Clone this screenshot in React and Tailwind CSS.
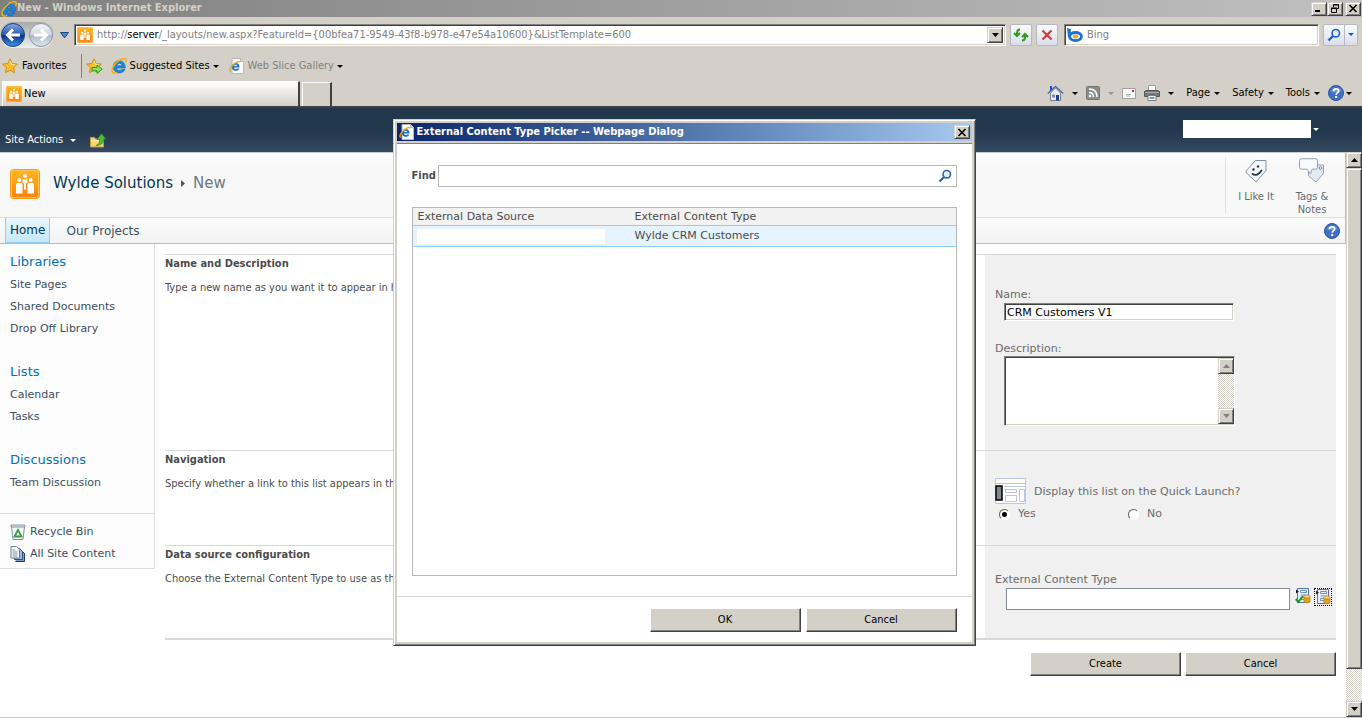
import React, { useState } from 'react';

const quickLaunch = [
  { title: 'Libraries', items: ['Site Pages', 'Shared Documents', 'Drop Off Library'] },
  { title: 'Lists', items: ['Calendar', 'Tasks'] },
  { title: 'Discussions', items: ['Team Discussion'] },
];

// Classic Windows bevels
const sunken =
  'bg-white border border-t-[#808080] border-l-[#808080] border-r-white border-b-white shadow-[inset_1px_1px_0_#404040,inset_-1px_-1px_0_#d4d0c8]';
const raised =
  'bg-[#d4d0c8] border border-t-[#d4d0c8] border-l-[#d4d0c8] border-r-[#404040] border-b-[#404040] shadow-[inset_1px_1px_0_#fff,inset_-1px_-1px_0_#808080]';
const checker =
  'bg-[conic-gradient(#fff_25%,#d4d0c8_0_50%,#fff_0_75%,#d4d0c8_0)] bg-[length:2px_2px]';
const tahoma = "font-['DejaVu_Sans_Condensed',Tahoma,sans-serif]";

function Caret({ className = 'text-black' }) {
  return (
    <svg width="6" height="3" viewBox="0 0 6 3" className={`shrink-0 ${className}`}>
      <path d="M0 0h6L3 3z" fill="currentColor" />
    </svg>
  );
}

function PeopleIcon({ size }) {
  return (
    <svg width={size} height={size} viewBox="0 0 30 30" className="shrink-0">
      <defs>
        <linearGradient id="orange" x1="0" y1="0" x2="0" y2="1">
          <stop offset="0" stopColor="#ffb81c" />
          <stop offset="1" stopColor="#ff7f0e" />
        </linearGradient>
      </defs>
      <rect x="0.5" y="0.5" width="29" height="29" rx="3" fill="url(#orange)" stroke="#f6a01a" />
      <rect x="1.5" y="1.5" width="27" height="27" rx="2" fill="none" stroke="#ffc64d" />
      <g fill="#fff">
        <circle cx="9.3" cy="11" r="2" />
        <circle cx="20.7" cy="11" r="2" />
        <circle cx="15" cy="7" r="2" />
        <path d="M6 15.500q0-1.500 1.500-1.500h3.500q1.500 0 1.500 1.500V24.500H6zM17.500 15.500q0-1.500 1.500-1.500h3.500q1.500 0 1.500 1.500v9h-6.500z" />
        <path d="M12.500 10.500h5v3l-1.500 1v6h-2v-6l-1.500-1z" />
      </g>
    </svg>
  );
}

function IeIcon() {
  return (
    <svg width="16" height="16" viewBox="0.5 0 16 16" className="shrink-0">
      <path d="M14.800 10H6.200c.2 1.500 1.300 2.300 2.700 2.300 1.100 0 1.900-.4 2.300-1.100h3.200c-.9 2.500-2.900 3.700-5.600 3.700C5.200 14.900 2.700 12.500 2.700 8.900 2.700 5.300 5.200 2.800 8.700 2.800c3.800 0 6.200 2.600 6.100 7.200zM6.300 7.700h5.200c-.1-1.400-1.200-2.300-2.600-2.300S6.500 6.300 6.300 7.700z" fill="#1d86dd" stroke="#0b55a8" strokeWidth=".5" />
      <path d="M3 15C-.4 13.500 2.500 6.500 8 2.800c3.300-2.200 6.900-2.800 7.600-1.300.4.800.1 2-.6 3.200" fill="none" stroke="#efb012" strokeWidth="1.500" />
      <path d="M3 15c1 .5 2.400.1 3.800-.7" fill="none" stroke="#efb012" strokeWidth="1.300" />
    </svg>
  );
}

function IePageIcon() {
  return (
    <svg width="16" height="16" viewBox="0 0 16 16" className="shrink-0">
      <path d="M3 .5h8.500l3 3v12H3z" fill="#fbfbfb" stroke="#b9b9b9" />
      <path d="M11.500.5v3h3" fill="#ddd" stroke="#b9b9b9" />
      <path d="M10.500 9.500H5c.2 1.200.9 1.600 1.800 1.600.7 0 1.100-.2 1.500-.7h2c-.6 1.600-1.900 2.400-3.600 2.400-2.300 0-3.900-1.400-3.900-3.700S4.500 5 6.800 5s3.800 1.700 3.700 4.500zM5 8h3.200C8 7.100 7.500 6.700 6.700 6.700S5.200 7.100 5 8z" fill="#1a74cf" />
      <path d="M1.500 13.800C-.3 12 2.500 7.500 6 5.200c2.500-1.600 4.800-2 5.300-1" fill="none" stroke="#e9a90c" strokeWidth="1.300" />
    </svg>
  );
}

function StarIcon({ arrow }) {
  return (
    <svg width="17" height="16" viewBox="0 0 17 16" className="shrink-0">
      <path d="M8 .8l2.200 4.800 5.200.5-3.900 3.500 1.100 5.200L8 12.200l-4.600 2.600 1.100-5.200L.6 6.100l5.200-.5z" fill="#fbbf2c" stroke="#d68c10" />
      <path d="M8 2.800l1.300 3.500 3.500.4" fill="none" stroke="#ffe594" />
      {arrow && <path d="M6 9.500h5v-2.500l5.200 4.200-5.200 4.200v-2.600H6z" fill="#8fe35c" stroke="#2c9a1c" />}
    </svg>
  );
}

function HelpIcon() {
  return (
    <svg width="16" height="16" viewBox="0 0 16 16" className="shrink-0">
      <circle cx="8" cy="8" r="7.500" fill="#3f6fc6" stroke="#2a55a8" />
      <path d="M2.500 6a6 5 0 0 1 11 0q-5.500 2.500-11 0z" fill="#6d98dd" />
      <path d="M5.600 6.200c0-3.200 5-3.100 5-.3 0 1.700-2.400 1.900-2.400 3.900" fill="none" stroke="#fff" strokeWidth="1.800" />
      <rect x="7.200" y="11" width="2" height="2" fill="#fff" />
    </svg>
  );
}

function RoundArrow({ forward }) {
  return (
    <svg width="26" height="26" viewBox="0 0 26 26">
      <defs>
        <linearGradient id={forward ? 'fwd' : 'back'} x1="0" y1="0" x2="0" y2="1">
          <stop offset="0" stopColor={forward ? '#f4f5f7' : '#86a9de'} />
          <stop offset=".48" stopColor={forward ? '#d3d8e0' : '#2a5cb4'} />
          <stop offset=".52" stopColor={forward ? '#b3bccb' : '#0a2f86'} />
          <stop offset="1" stopColor={forward ? '#dce4f0' : '#3f9bee'} />
        </linearGradient>
      </defs>
      <circle cx="13" cy="13" r="11.500" fill={forward ? 'url(#fwd)' : 'url(#back)'} stroke={forward ? '#8e98a8' : '#1c3f80'} />
      <path
        d={forward ? 'M6 13h12M13 7.500l5.500 5.500-5.500 5.500' : 'M20 13H8M13 7.500L7.500 13l5.500 5.500'}
        fill="none"
        stroke="#fff"
        strokeWidth="3"
      />
    </svg>
  );
}

function Magnifier({ size = 14, color = '#1f5fe0' }) {
  return (
    <svg width={size} height={size} viewBox="0 0 14 14" className="shrink-0">
      <path d="M1.500 12.500l4.500-4.500" stroke={color} strokeWidth="2.400" />
      <circle cx="8.800" cy="5.200" r="3.700" fill="#e8f4fd" stroke={color} strokeWidth="1.700" />
    </svg>
  );
}

function WindowButton({ label, children }) {
  return (
    <button type="button" aria-label={label} className={`w-4 h-3.5 flex items-center justify-center ${raised}`}>
      <svg width="10" height="9" viewBox="0 0 10 9" fill="none" stroke="#000">{children}</svg>
    </button>
  );
}

function CloseGlyph() {
  return <path d="M1.500 1l7 7M8.500 1l-7 7" strokeWidth="1.600" />;
}

function ScrollButton({ down, muted, label }) {
  return (
    <button type="button" aria-label={label} className={`w-4 h-4 shrink-0 flex items-center justify-center ${raised}`}>
      <svg width="7" height="4" viewBox="0 0 7 4">
        <path d={down ? 'M0 0h7L3.500 4z' : 'M0 4h7L3.500 0z'} fill={muted ? '#808080' : '#000'} />
      </svg>
    </button>
  );
}

function FormButton({ children, onClick }) {
  return (
    <button
      type="button"
      onClick={onClick}
      className={`w-[151px] h-6 text-[11px] text-black bg-[#d4d0c8] border border-t-white border-l-white border-r-[#404040] border-b-[#404040] shadow-[inset_-1px_-1px_0_#808080] ${tahoma}`}
    >
      {children}
    </button>
  );
}

function TitleBar() {
  return (
    <div className="h-[17px] flex items-center pl-px pr-px bg-linear-to-r from-[#808080] to-[#c0c0c0]">
      <IeIcon />
      <h1 className={`flex-1 text-[11px] font-bold text-[#d4d0c8] ${tahoma}`}>New - Windows Internet Explorer</h1>
      <WindowButton label="Minimize"><path d="M1 7h5" strokeWidth="2" /></WindowButton>
      <WindowButton label="Restore">
        <path d="M3.500 3V.5h5v4H7M3 1h6M1.500 4.500h5v4h-5zM1 4h6" />
      </WindowButton>
      <div className="w-0.5" />
      <WindowButton label="Close"><CloseGlyph /></WindowButton>
    </div>
  );
}

function AddressRow() {
  const small = 'h-[22px] flex items-center justify-center border border-[#b4b9c4] bg-linear-to-b from-[#fafbfd] to-[#d9deea]';
  return (
    <div className="h-[35px] flex items-center pr-1">
      <div className="flex gap-0.5 items-center rounded-full bg-linear-to-b from-[#aaaaaa] to-[#eeeeee]">
        <button type="button" aria-label="Back"><RoundArrow /></button>
        <button type="button" aria-label="Forward"><RoundArrow forward /></button>
      </div>
      <button type="button" aria-label="Recent pages" className="w-5 flex justify-center">
        <svg width="9" height="6" viewBox="0 0 9 6"><path d="M.5.5h8L5 5.500H4z" fill="#4d83c4" stroke="#174a86" /></svg>
      </button>
      <div className={`flex-1 h-[22px] flex items-center px-0.5 gap-1 ${sunken}`}>
        <PeopleIcon size={16} />
        <div className={`flex-1 pt-px text-[11px] text-[#808080] whitespace-nowrap ${tahoma}`}>
          http://<span className="text-black">server</span>/_layouts/new.aspx?FeatureId={'{00bfea71-9549-43f8-b978-e47e54a10600}'}&amp;ListTemplate=600
        </div>
        <ScrollButton down label="Show addresses" />
      </div>
      <button type="button" aria-label="Refresh" className={`ml-1 w-[22px] rounded-xs ${small}`}>
        <svg width="16" height="14" viewBox="0 0 16 14" fill="none" stroke="#2f9a1c" strokeWidth="2">
          <path d="M7 1.500Q4 1.500 4 5v2M1 5l3 3 3-3M9 12.500q3 0 3-3.500V7M9 9l3-3 3 3" />
        </svg>
      </button>
      <button type="button" aria-label="Stop" className={`ml-1 w-[22px] rounded-xs ${small}`}>
        <svg width="12" height="12" viewBox="0 0 12 12" stroke="#cf3a3a" strokeWidth="2.200"><path d="M1.500 1.500l9 9M10.500 1.500l-9 9" /></svg>
      </button>
      <div className={`ml-1.5 w-[255px] h-[22px] flex items-center gap-1 pl-0.5 ${sunken}`}>
        <svg width="16" height="16" viewBox="0 0 16 16" className="shrink-0">
          <ellipse cx="8.500" cy="9.500" rx="6" ry="4" fill="#fff" stroke="#1573d6" strokeWidth="2.800" />
          <path d="M0 1l3.800 1v8H1Z" fill="#1573d6" />
          <ellipse cx="8.500" cy="9.500" rx="2.700" ry="2" fill="#f7a51c" />
        </svg>
        <input aria-label="Search" placeholder="Bing" className={`flex-1 min-w-0 pt-px text-[11px] placeholder:text-[#808080] outline-none ${tahoma}`} />
      </div>
      <button type="button" aria-label="Go" className={`ml-1 w-[22px] rounded-l-xs ${small}`}><Magnifier /></button>
      <button type="button" aria-label="Search options" className={`w-[13px] rounded-r-xs border-l-0 ${small}`}>
        <Caret className="text-[#1453d8]" />
      </button>
    </div>
  );
}

function FavoritesRow() {
  return (
    <div className={`h-[28px] flex items-center pl-0.5 text-[11px] ${tahoma}`}>
      <button type="button" className="flex items-center gap-[3px]"><StarIcon />Favorites</button>
      <div className="ml-3.5 h-6 border-l border-[#808080]" />
      <button type="button" aria-label="Add to Favorites Bar" className="ml-1"><StarIcon arrow /></button>
      <button type="button" className="ml-2 flex items-center gap-[3px]"><IeIcon />Suggested Sites<Caret /></button>
      <button type="button" className="ml-2.5 flex items-center gap-[3px] text-[#808080]"><IePageIcon />Web Slice Gallery<Caret /></button>
    </div>
  );
}

function CommandBar() {
  return (
    <div className={`ml-auto flex items-center self-start h-[26px] pr-2.5 text-[11px] ${tahoma}`}>
      <button type="button" aria-label="Home" className="flex items-center gap-2">
        <svg width="17" height="17" viewBox="0 0 17 17">
          <path d="M3.500 8v7.500h10V8L8.500 3z" fill="#e9e9ee" stroke="#77809a" />
          <path d="M.8 8.500L8.500 1.500l7.700 7" fill="none" stroke="#4b6faf" strokeWidth="1.500" />
          <path d="M3 1h2v4l-2 1z" fill="#2648c8" />
          <path d="M9 10h3v5.500H9z" fill="#1f3f87" /><path d="M5 9.500h3v3H5z" fill="#7b8bb0" />
        </svg>
        <Caret />
      </button>
      <button type="button" aria-label="Feeds" className="ml-2 flex items-center gap-2">
        <svg width="14" height="14" viewBox="0 0 14 14">
          <rect x=".5" y=".5" width="13" height="13" rx="1" fill="#8c8c8c" stroke="#757575" />
          <path d="M3 3q8 0 8 8M3 6.500q4.500 0 4.500 4.500" fill="none" stroke="#fff" strokeWidth="1.600" />
          <circle cx="4" cy="10" r="1.300" fill="#fff" />
        </svg>
        <Caret className="text-[#909090]" />
      </button>
      <button type="button" aria-label="Read mail" className="ml-2">
        <svg width="14" height="11" viewBox="0 0 14 11">
          <path d="M.5.500h13v10H.5z" fill="#fafafa" stroke="#a0a0a0" />
          <path d="M10 2h2v2h-2z" fill="#e02020" /><path d="M4 6.500h5M4 8h4" stroke="#b0b0b0" />
        </svg>
      </button>
      <button type="button" aria-label="Print" className="ml-2 flex items-center gap-2">
        <svg width="16" height="16" viewBox="0 0 16 16">
          <path d="M4.500 6V.5h7V6" fill="#fff" stroke="#999" />
          <path d="M.5 6.500l1.500-1h12l1.500 1v5h-15z" fill="#777" stroke="#555" />
          <path d="M1 7.500h14" stroke="#aaa" />
          <path d="M4 10.500h8v5H4z" fill="#fff" stroke="#777" /><path d="M5.500 12h5v2h-5z" fill="#5f9cd0" />
        </svg>
        <Caret />
      </button>
      <button type="button" className="ml-3 flex items-center gap-1">Page<Caret /></button>
      <button type="button" className="ml-3 flex items-center gap-1">Safety<Caret /></button>
      <button type="button" className="ml-3 flex items-center gap-1">Tools<Caret /></button>
      <button type="button" aria-label="Help" className="ml-2 flex items-center gap-0.5"><HelpIcon /><Caret /></button>
    </div>
  );
}

function TabRow() {
  return (
    <div className="h-[28px] flex items-end pl-0.5 border-b-2 border-[#404040]">
      <button
        type="button"
        className={`w-[298px] h-[25px] flex items-center gap-0.5 pl-[3px] text-[11px] bg-linear-to-b from-white to-[#d4d0c8] border-t border-l border-white border-r-2 border-r-[#404040] ${tahoma}`}
      >
        <PeopleIcon size={16} />New
      </button>
      <button type="button" aria-label="New tab" className="ml-0.5 w-[30px] h-6 border-t border-l border-t-white border-l-white border-r-2 border-r-[#404040]" />
      <CommandBar />
    </div>
  );
}

function Ribbon() {
  return (
    <div className="h-[44px] flex items-end justify-between bg-linear-to-b from-[#21374c] from-50% to-[#35495f]">
      <div className={`flex items-center h-6 pl-[5px] text-[11px] text-white ${tahoma}`}>
        <button type="button" className="flex items-center gap-[7px]">Site Actions<Caret className="text-white" /></button>
        <button type="button" aria-label="Navigate up" className="ml-3.5">
          <svg width="16" height="15" viewBox="0 0 16 15">
            <path d="M.5 4.500h4l1 1.500h8v8H.5z" fill="#f3d27c" stroke="#c89a3c" />
            <path d="M1 8h12" stroke="#fdf0bd" />
            <path d="M6 12.500q4-1 3.500-6H7L11.500.8 15.800 6h-2.300q.5 6-7.500 6.500z" fill="#4cc22f" stroke="#2c8a1b" strokeWidth=".7" />
          </svg>
        </button>
      </div>
      <div className="flex items-center gap-0.5 self-start pt-3 pr-[43px]">
        <div className="w-[128px] h-[18px] bg-white" />
        <Caret className="text-white" />
      </div>
    </div>
  );
}

function SiteHeader() {
  const social = `flex flex-col items-center gap-1.5 w-14 text-[11px] leading-[13px] text-[#66686f] ${tahoma}`;
  return (
    <header className="border-t border-[#c8ccd2] border-r border-r-[#c0c0c0] bg-[#f9f9f9]">
      <div className="flex h-[65px] border-b border-[#dcdcdc] bg-linear-to-b from-white to-[#f8f8f8] to-20%">
        <div className="flex items-center h-[62px] pl-2.5">
          <PeopleIcon size={30} />
          <h2 className="ml-[13px] flex items-center gap-2 pb-0.5 text-[15px] text-[#003759]">
            <a href="#site">Wylde Solutions</a>
            <svg width="4" height="7" viewBox="0 0 4 7"><path d="M0 0l4 3.500L0 7z" fill="#4b5563" /></svg>
            <span className="text-[#6d7782]">New</span>
          </h2>
        </div>
        <div className="ml-auto mt-[5px] mb-1 pr-[5px] flex items-start border-l border-[#dfdfdf]">
          <button type="button" className={`${social} ml-0.5`}>
            <svg width="26" height="26" viewBox="0 0 26 26">
              <path d="M12.500 2.500h10.500v10L13 24l-10-9.500V13z" fill="#f3f6fa" stroke="#8291a8" strokeLinejoin="round" />
              <path d="M9 15.500q5 4 10-3.500" fill="none" stroke="#26374f" strokeWidth="1.800" />
              <circle cx="10.500" cy="11.500" r="1.200" fill="#26374f" /><circle cx="15" cy="8.500" r="1.200" fill="#26374f" />
            </svg>
            I Like It
          </button>
          <button type="button" className={social}>
            <svg width="26" height="26" viewBox="0 0 26 26">
              <path d="M14 7h10.500v8.500L17 24l-7.500-6v-5z" fill="#e3eaf4" stroke="#94a2b8" strokeLinejoin="round" />
              <circle cx="21.500" cy="10" r="1.300" fill="#fff" stroke="#71839e" />
              <path d="M2.500.7h14q2 0 2 2v6.500q0 2-2 2H13L11.500 16 8 11.200H2.500q-2 0-2-2V2.700q0-2 2-2z" fill="#f7f9fc" stroke="#94a2b8" />
            </svg>
            Tags &amp; Notes
          </button>
        </div>
      </div>
      <nav className="flex items-center h-[26px] pl-[5px] pr-[5px] text-[12px] border-b border-[#b8babd] bg-linear-to-b from-[#fbfbfb] to-[#f3f3f3]">
        <a href="#home" className="self-stretch flex items-center px-1 text-[#003759] border-x border-b border-[#91cdf2] bg-linear-to-b from-[#e9f6fd] to-[#c6e8fb]">Home</a>
        <a href="#projects" className="ml-4 text-[#3b4f65]">Our Projects</a>
        <button type="button" aria-label="Help" className="ml-auto"><HelpIcon /></button>
      </nav>
    </header>
  );
}

function Sidebar() {
  return (
    <aside className="w-[155px] shrink-0 self-start pt-1.5 text-[11px] text-[#3b4f65] bg-[#fcfcfc] border-r border-b border-[#dbddde]">
      <div className="flex flex-col gap-5 pb-[19px] pl-2.5">
        {quickLaunch.map((group) => (
          <div key={group.title}>
            <a href="#group" className="block text-[13px] leading-6 text-[#0072bc]">{group.title}</a>
            <ul>
              {group.items.map((item) => (
                <li key={item} className="leading-[22px]"><a href="#item">{item}</a></li>
              ))}
            </ul>
          </div>
        ))}
      </div>
      <ul className="pt-[7px] pb-[3px] pl-2.5 leading-[22px] border-t border-[#dbddde]">
        <li>
          <a href="#recycle" className="flex items-center gap-1">
            <svg width="16" height="16" viewBox="0 0 16 16">
              <path d="M1.500 2.500h13L13 15.500H3z" fill="#f4f7f9" stroke="#8195a3" />
              <path d="M1 1h14v2H1z" fill="#dde4e9" stroke="#70838f" strokeWidth=".8" />
              <path d="M8 6l3.500 6.500h-7z" fill="none" stroke="#3d9a45" strokeWidth="1.800" />
            </svg>
            Recycle Bin
          </a>
        </li>
        <li>
          <a href="#content" className="flex items-center gap-1">
            <svg width="16" height="16" viewBox="0 0 16 16">
              <path d="M7.500 4.500h4l3 3v8h-9" fill="#7fa3cf" stroke="#23395c" />
              <path d="M4.500 2.500h5l3 3v8h-8z" fill="#9dbce0" stroke="#33507a" />
              <path d="M1 .5h5.500l3 3V12H1z" fill="#fff" stroke="#66788f" />
              <path d="M2.500 4h3M2.500 6h5M2.500 8h5M2.500 10h5" stroke="#7a8da6" />
            </svg>
            All Site Content
          </a>
        </li>
      </ul>
    </aside>
  );
}

function FormSection({ title, description, children }) {
  return (
    <section className="grid grid-cols-[1fr_351px] border-t border-[#d8d8d8]">
      <div className={`pt-px text-[11px] leading-4 text-[#4c4c4c] ${tahoma}`}>
        <h3 className="font-bold">{title}</h3>
        <p className="mt-2 whitespace-nowrap">{description}</p>
      </div>
      <div className="pl-2.5 pr-1 bg-[#f0f0f0] text-[11px] leading-[14px] text-[#6b6b6b]">{children}</div>
    </section>
  );
}

const radioClass =
  'appearance-none w-[11px] h-[11px] rounded-full border border-t-[#606060] border-l-[#606060] border-r-white border-b-white bg-white checked:bg-[radial-gradient(#000_0_2px,#fff_3px)]';

function EntityIcon({ check }) {
  return (
    <svg width="16" height="16" viewBox="0 0 16 16">
      <path d="M2.500.5h11v14h-11z" fill="#e9effa" stroke="#5271b5" />
      <path d="M5.500 2.500h6v2h-6zM5.500 7h6M5.500 9.500h4v2h-4z" fill="none" stroke="#7690c4" />
      <path d="M1 1.500l3 2-3 2z" fill="#222" />
      <path d="M9 8.500v5.500q3 2 6 0V8.500z" fill="#e5a21c" stroke="#b57d12" strokeWidth=".7" />
      <ellipse cx="12" cy="8.500" rx="3" ry="1.500" fill="#fbdc85" stroke="#b57d12" strokeWidth=".7" />
      {check && <path d="M.8 11l2.500 3L8 8" fill="none" stroke="#1d9a1d" strokeWidth="2" />}
    </svg>
  );
}

function NewListForm() {
  const [name, setName] = useState('CRM Customers V1');
  return (
    <form className="flex-1 py-2.5 px-2.5">
      <FormSection title="Name and Description" description="Type a new name as you want it to appear in headings and links throughout the site.">
        <div className="pt-[33px] pb-6">
          <label htmlFor="name" className="block">Name:</label>
          <input
            id="name"
            value={name}
            onChange={(e) => setName(e.target.value)}
            className={`block ml-[9px] mt-px w-[230px] h-[18px] px-0.5 text-black outline-none ${sunken}`}
          />
          <label htmlFor="description" className="block mt-[21px]">Description:</label>
          <div className={`flex ml-[9px] w-[231px] h-[70px] p-px pr-0 ${sunken}`}>
            <textarea id="description" className="flex-1 resize-none outline-none overflow-hidden" />
            <div className={`flex flex-col justify-between ${checker}`}>
              <ScrollButton muted label="Scroll up" />
              <ScrollButton muted down label="Scroll down" />
            </div>
          </div>
        </div>
      </FormSection>
      <FormSection title="Navigation" description="Specify whether a link to this list appears in the Quick Launch.">
        <fieldset className="pt-[27px] pb-6">
          <div className="flex items-center gap-2">
            <svg width="31" height="26" viewBox="0 0 31 26">
              <path d="M.5.5h30v25H.5z" fill="#fff" stroke="#bcc4e0" />
              <path d="M1 5.500h29M9 8.500h21M10.500 11.500h11v3h-11zM10.500 17.500h11v6h-11zM24.500 11.500h5v12h-5z" fill="none" stroke="#bcc4e0" />
              <path d="M1 8h6v14H1z" fill="#7f8690" stroke="#000" strokeWidth="1.500" />
            </svg>
            <legend className="pt-0.5">Display this list on the Quick Launch?</legend>
          </div>
          <div className="flex mt-[3px] pl-1">
            <label className="flex items-center gap-2 w-[129px]">
              <input type="radio" name="quick" defaultChecked className={radioClass} />Yes
            </label>
            <label className="flex items-center gap-2">
              <input type="radio" name="quick" className={radioClass} />No
            </label>
          </div>
        </fieldset>
      </FormSection>
      <FormSection title="Data source configuration" description="Choose the External Content Type to use as the data source for this list.">
        <div className="pt-[27px] pb-7">
          <label htmlFor="ect" className="block">External Content Type</label>
          <div className="flex items-start mt-px pl-[11px]">
            <input id="ect" className="w-[284px] h-[22px] px-1 bg-white border border-[#868b98] outline-none" />
            <button type="button" aria-label="Check external content type" className="ml-[5px]"><EntityIcon check /></button>
            <button type="button" aria-label="Select external content type" className="ml-[3px] border border-dotted border-black"><EntityIcon /></button>
          </div>
        </div>
      </FormSection>
      <div className="flex justify-end gap-1 pt-3 border-t-2 border-[#d8d8d8]">
        <FormButton>Create</FormButton>
        <FormButton>Cancel</FormButton>
      </div>
    </form>
  );
}

function PickerDialog({ onClose }) {
  return (
    <div className="fixed inset-0 flex items-start justify-center pt-[119px] pl-[6px]">
      <div
        role="dialog"
        aria-labelledby="picker-title"
        className="w-[583px] p-[3px] bg-[#d4d0c8] border border-t-[#d4d0c8] border-l-[#d4d0c8] border-r-[#404040] border-b-[#404040] shadow-[inset_1px_1px_0_#fff,inset_-1px_-1px_0_#808080]"
      >
        <div className="flex items-center gap-0.5 h-[18px] px-0.5 bg-linear-to-r from-[#0a246a] to-[#a6caf0]">
          <IePageIcon />
          <h2 id="picker-title" className={`flex-1 text-[11px] font-bold text-white ${tahoma}`}>External Content Type Picker -- Webpage Dialog</h2>
          <button type="button" aria-label="Close" onClick={onClose} className={`w-4 h-3.5 flex items-center justify-center ${raised}`}>
            <svg width="10" height="9" viewBox="0 0 10 9" fill="none" stroke="#000"><CloseGlyph /></svg>
          </button>
        </div>
        <div className="mt-0.5 pt-[21px] bg-white border-t border-[#808080]">
          <div className="flex items-center px-[15px]">
            <label htmlFor="find" className={`w-[26px] text-[11px] font-bold text-[#4c4c4c] ${tahoma}`}>Find</label>
            <div className="flex-1 h-[22px] flex items-center pr-1 border border-[#b8b8b8]">
              <input id="find" className="flex-1 min-w-0 px-1 text-[11px] outline-none" />
              <button type="button" aria-label="Search"><Magnifier color="#2f63b0" /></button>
            </div>
          </div>
          <div className="mx-[15px] mt-5 h-[369px] border border-[#b8b8b8]">
            <table className="w-full table-fixed border-collapse text-[11px] leading-4 text-[#4c4c4c] text-left">
              <thead>
                <tr className="bg-[#f2f2f2]">
                  <th className="w-[217px] pt-px pl-[5px] font-normal">External Data Source</th>
                  <th className="pt-px pl-[5px] font-normal">External Content Type</th>
                </tr>
              </thead>
              <tbody>
                <tr className="h-[21px] bg-[#e5f3ff] border-y border-[#91cdf2]">
                  <td className="pl-1"><div className="w-[188px] h-[15px] bg-white" /></td>
                  <td className="pl-[5px]">Wylde CRM Customers</td>
                </tr>
              </tbody>
            </table>
          </div>
          <div className="flex justify-end gap-[5px] mt-5 pt-[11px] pb-2.5 px-[15px] border-t border-[#d8d8d8]">
            <FormButton onClick={onClose}>OK</FormButton>
            <FormButton onClick={onClose}>Cancel</FormButton>
          </div>
        </div>
      </div>
    </div>
  );
}

function App() {
  const [pickerOpen, setPickerOpen] = useState(true);

  return (
    <div className="min-h-screen flex flex-col bg-white font-['DejaVu_Sans',Verdana,sans-serif]">
      <div className="bg-[#d4d0c8]">
        <TitleBar />
        <AddressRow />
        <FavoritesRow />
        <TabRow />
      </div>
      <Ribbon />
      <div className="flex-1 flex border-b border-[#c8c8c8]">
        <div className="flex-1 min-w-0">
          <SiteHeader />
          <div className="flex">
            <Sidebar />
            <NewListForm />
          </div>
        </div>
        {/* page scroll bar */}
        <div className={`w-4 flex flex-col ${checker}`}>
          <ScrollButton label="Page up" />
          <div className={`grow ${raised}`} />
          <div className="h-8" />
          <ScrollButton down label="Page down" />
        </div>
      </div>
      {pickerOpen && <PickerDialog onClose={() => setPickerOpen(false)} />}
    </div>
  );
}

export default App;
